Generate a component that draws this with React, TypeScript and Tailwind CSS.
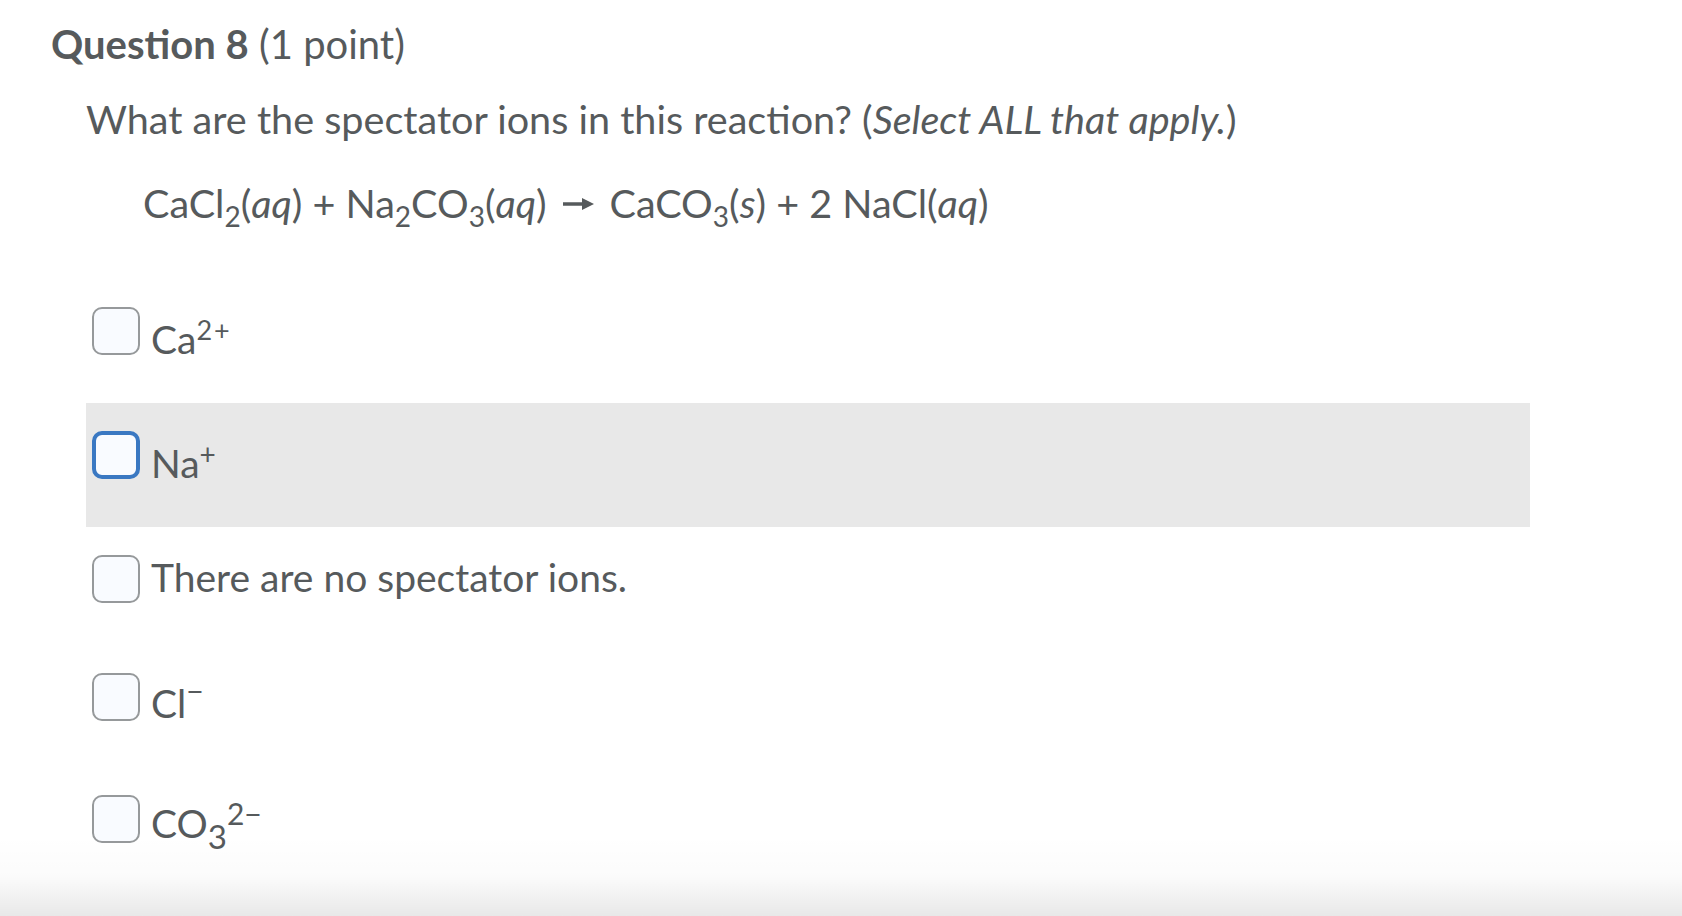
import React from 'react';

type Option = {
  id: string;
  label: React.ReactNode;
  focused?: boolean;
};

const Arrow: React.FC = () => (
  <svg width="31" height="16" viewBox="0 0 31 16" className="inline-block ml-[16px] mr-[16px] align-[6px]">
    <path d="M0 8 H21" stroke="#565a5c" strokeWidth="3.5" />
    <path d="M19 2 L31 8 L19 14 Z" fill="#565a5c" />
  </svg>
);

// equation subscript
const Sub: React.FC<{ children: React.ReactNode }> = ({ children }) => (
  <span className="text-[28px] leading-none align-[-9px]">{children}</span>
);

const options: Option[] = [
  {
    id: 'ca',
    label: (
      <>
        Ca<span className="text-[27px] leading-[45px] align-[14px] tracking-[2px]">2+</span>
      </>
    ),
  },
  {
    id: 'na',
    focused: true,
    label: (
      <>
        Na<span className="text-[28px] leading-[46px] align-[13px]">+</span>
      </>
    ),
  },
  { id: 'none', label: <>There are no spectator ions.</> },
  {
    id: 'cl',
    label: (
      <>
        Cl<span className="text-[30px] leading-[35px] align-[16px]">−</span>
      </>
    ),
  },
  {
    id: 'co3',
    label: (
      <>
        CO<span className="text-[33px] leading-[20px] align-[-11px]">3</span>
        <span className="text-[30px] leading-[37px] align-[13px]">2−</span>
      </>
    ),
  },
];

const Checkbox: React.FC<{ focused?: boolean }> = ({ focused }) => (
  <div
    className={
      focused
        ? 'w-[48px] h-[48px] shrink-0 rounded-[10px] border-4 border-[#3a78c2] bg-[#f9fbff]'
        : 'w-[48px] h-[48px] shrink-0 rounded-[10px] border-2 border-[#96999b] bg-[#f9fbff]'
    }
  />
);

export default function App() {
  return (
    <div
      className="relative min-h-[916px] bg-white text-[#565a5c] overflow-hidden pt-[20px]"
      style={{ fontFamily: 'Lato, "Open Sans", sans-serif' }}
    >
      <h1 className="pl-[51px] text-[40px] leading-[48px]">
        <span className="font-bold">Question 8</span> (1 point)
      </h1>

      <div className="pl-[86px]">
        <p className="mt-[27px] text-[39.6px] leading-[48px]">
          What are the spectator ions in this reaction? (<i>Select ALL that apply.</i>)
        </p>

        <p className="mt-[36px] ml-[57px] text-[39.6px] leading-[48px]">
          CaCl<Sub>2</Sub>(<i>aq</i>) + Na<Sub>2</Sub>CO<Sub>3</Sub>(<i>aq</i>)
          <Arrow />
          CaCO<Sub>3</Sub>(<i>s</i>) + 2 NaCl(<i>aq</i>)
        </p>

        <div className="mt-[49px] w-[1444px] flex flex-col">
          {options.map(opt => (
            <div
              key={opt.id}
              className={`flex items-start gap-[11px] pl-[6px] pt-[28px] pb-[42px] ${opt.focused ? 'bg-[#e8e8e8]' : ''}`}
            >
              <Checkbox focused={opt.focused} />
              <div className="text-[39px] leading-[44px]">{opt.label}</div>
            </div>
          ))}
        </div>
      </div>

      <div className="pointer-events-none absolute left-0 right-0 bottom-0 h-[80px] bg-linear-to-b from-transparent via-black/[0.015] to-black/[0.09]" />
    </div>
  );
}
